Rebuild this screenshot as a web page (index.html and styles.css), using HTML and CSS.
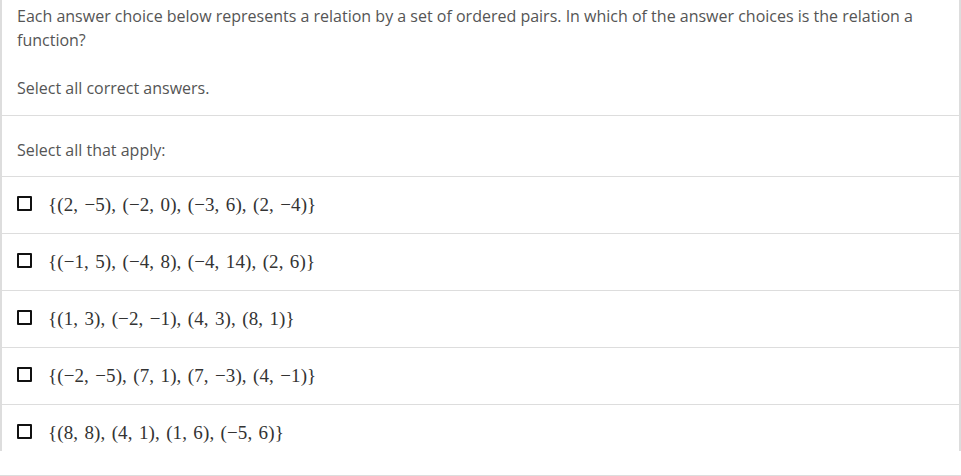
FILE: index.html
```html
<!DOCTYPE html>
<html>
<head>
<meta charset="utf-8">
<link rel="stylesheet" href="styles.css">
</head>
<body>
<div class="frame">
  <div class="question">
    <p>Each answer choice below represents a relation by a set of ordered pairs. In which of the answer choices is the relation a function?</p>
    <p class="gap">Select all correct answers.</p>
  </div>
  <div class="prompt">Select all that apply:</div>
  <div class="option"><span class="box"></span><span class="math">{(2, −5), (−2, 0), (−3, 6), (2, −4)}</span></div>
  <div class="option"><span class="box"></span><span class="math">{(−1, 5), (−4, 8), (−4, 14), (2, 6)}</span></div>
  <div class="option"><span class="box"></span><span class="math">{(1, 3), (−2, −1), (4, 3), (8, 1)}</span></div>
  <div class="option"><span class="box"></span><span class="math">{(−2, −5), (7, 1), (7, −3), (4, −1)}</span></div>
  <div class="option"><span class="box"></span><span class="math">{(8, 8), (4, 1), (1, 6), (−5, 6)}</span></div>
</div>
<div class="footer"></div>
</body>
</html>
```

FILE: styles.css
```css
html, body {
  margin: 0;
  padding: 0;
  background: #fff;
}
body {
  width: 961px;
  height: 476px;
  overflow: hidden;
  font-family: "Open Sans", "Liberation Sans", sans-serif;
  color: #555;
}
.frame {
  width: 957px;
  height: 451px;
  border-left: 2px solid #ddd;
  border-right: 2px solid #ddd;
  overflow: hidden;
}
.question {
  padding: 4px 15px 15px;
  font-size: 16px;
  line-height: 24px;
  border-bottom: 1px solid #ddd;
}
.question p {
  margin: 0;
}
.question .gap {
  margin-top: 24px;
}
.prompt {
  padding: 22px 15px 14px;
  font-size: 16px;
  line-height: 24px;
  border-bottom: 1px solid #ddd;
}
.option {
  height: 56px;
  display: flex;
  align-items: center;
  gap: 16px;
  padding: 0 15px;
  border-bottom: 1px solid #ddd;
}
.box {
  width: 11px;
  height: 11px;
  border: 2px solid #111;
  border-radius: 1px;
  flex: none;
  margin-top: -4px;
}
.math {
  font-family: "Liberation Serif", "Times New Roman", serif;
  font-size: 19px;
  color: #333;
  word-spacing: 1.5px;
  letter-spacing: 0.1px;
}
.footer {
  margin-top: 24px;
  border-top: 1px solid #ddd;
}
```
